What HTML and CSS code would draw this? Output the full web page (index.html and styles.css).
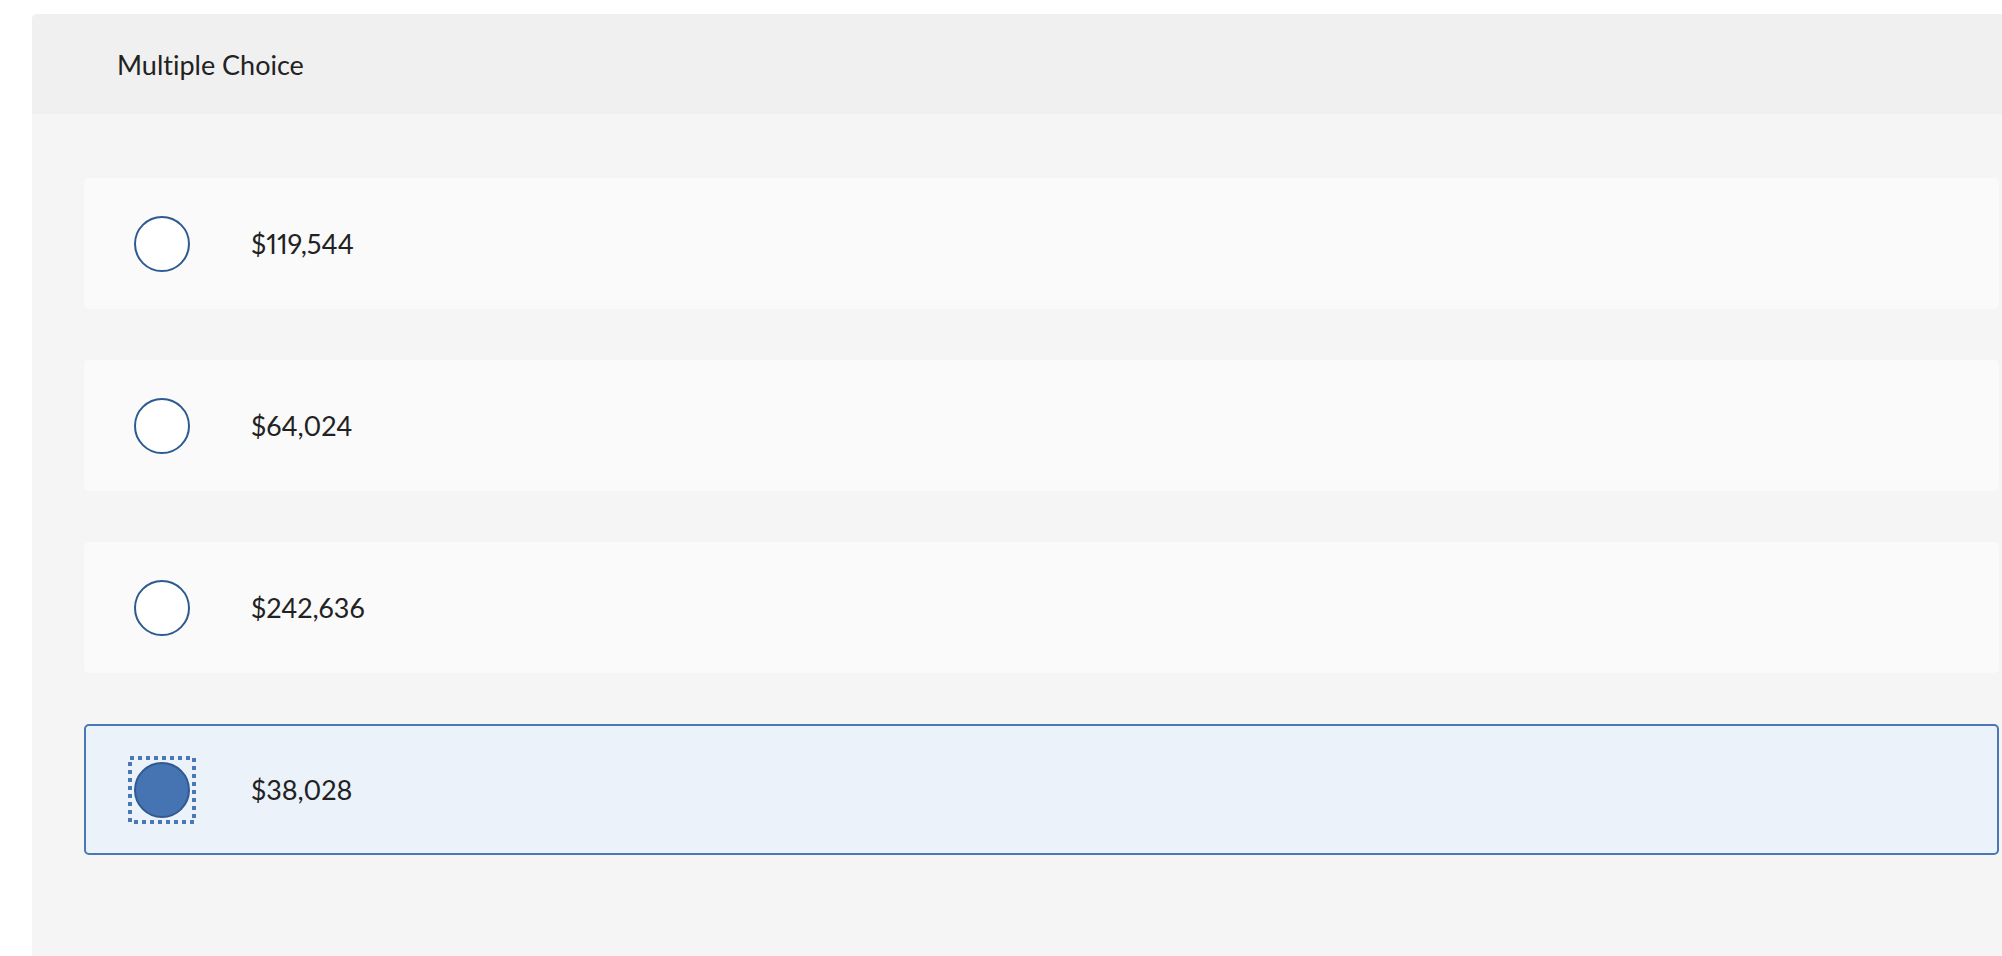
FILE: index.html
```html
<!DOCTYPE html>
<html lang="en">
<head>
    <meta charset="UTF-8">
    <meta name="viewport" content="width=device-width, initial-scale=1.0">
    <title>Multiple Choice</title>
    <link rel="stylesheet" href="styles.css">
</head>
<body>
    <div class="question">
        <div class="questionHeader">Multiple Choice</div>
        <div class="choices">
            <label class="choice">
                <span class="radio"></span>
                <span class="answer">$119,544</span>
            </label>
            <label class="choice">
                <span class="radio"></span>
                <span class="answer">$64,024</span>
            </label>
            <label class="choice">
                <span class="radio"></span>
                <span class="answer">$242,636</span>
            </label>
            <label class="choice selected">
                <span class="radio">
                    <svg class="focusRing" width="68" height="68" viewBox="0 0 68 68">
                        <rect x="2" y="2" width="64" height="64" fill="none" stroke="#4a78b5" stroke-width="4" stroke-dasharray="4 4"/>
                    </svg>
                </span>
                <span class="answer">$38,028</span>
            </label>
        </div>
    </div>
</body>
</html>
```

FILE: styles.css
```css
body {
    background-color: #fff;
    font-family: Lato, "Open Sans", Arial, sans-serif;
    font-variant-ligatures: none;
    color: #222;
    margin: 0;
    padding: 14px 0 0 32px;
    overflow: hidden;
    height: 100vh;
    box-sizing: border-box;
}

.question {
    background-color: #f5f5f5;
    border-radius: 5px 0 0 0;
    height: 100%;
}

.questionHeader {
    height: 100px;
    display: flex;
    align-items: center;
    padding-left: 85px;
    background-color: #f0f0f0;
    border-radius: 5px 0 0 0;
    font-size: 27px;
}

.choices {
    padding: 64px 3px 0 52px;
    display: flex;
    flex-direction: column;
    gap: 51px;
}

.choice {
    height: 131px;
    box-sizing: border-box;
    display: flex;
    align-items: center;
    padding-left: 48px;
    background-color: #fafafa;
    border: 2px solid transparent;
    border-radius: 5px;
    cursor: pointer;
}

.radio {
    position: relative;
    width: 56px;
    height: 56px;
    box-sizing: border-box;
    border-radius: 50%;
    border: 2px solid #2d5a91;
    background-color: #fff;
    flex-shrink: 0;
}

.answer {
    margin-left: 61px;
    font-size: 27px;
    font-feature-settings: "pnum" 1;
}

.selected {
    background-color: #ebf2fa;
    border-color: #4a78b5;
}

.selected .radio {
    background-color: #4674b2;
    border-color: #2f5a92;
}

.focusRing {
    position: absolute;
    top: -8px;
    left: -8px;
    display: block;
}
```
